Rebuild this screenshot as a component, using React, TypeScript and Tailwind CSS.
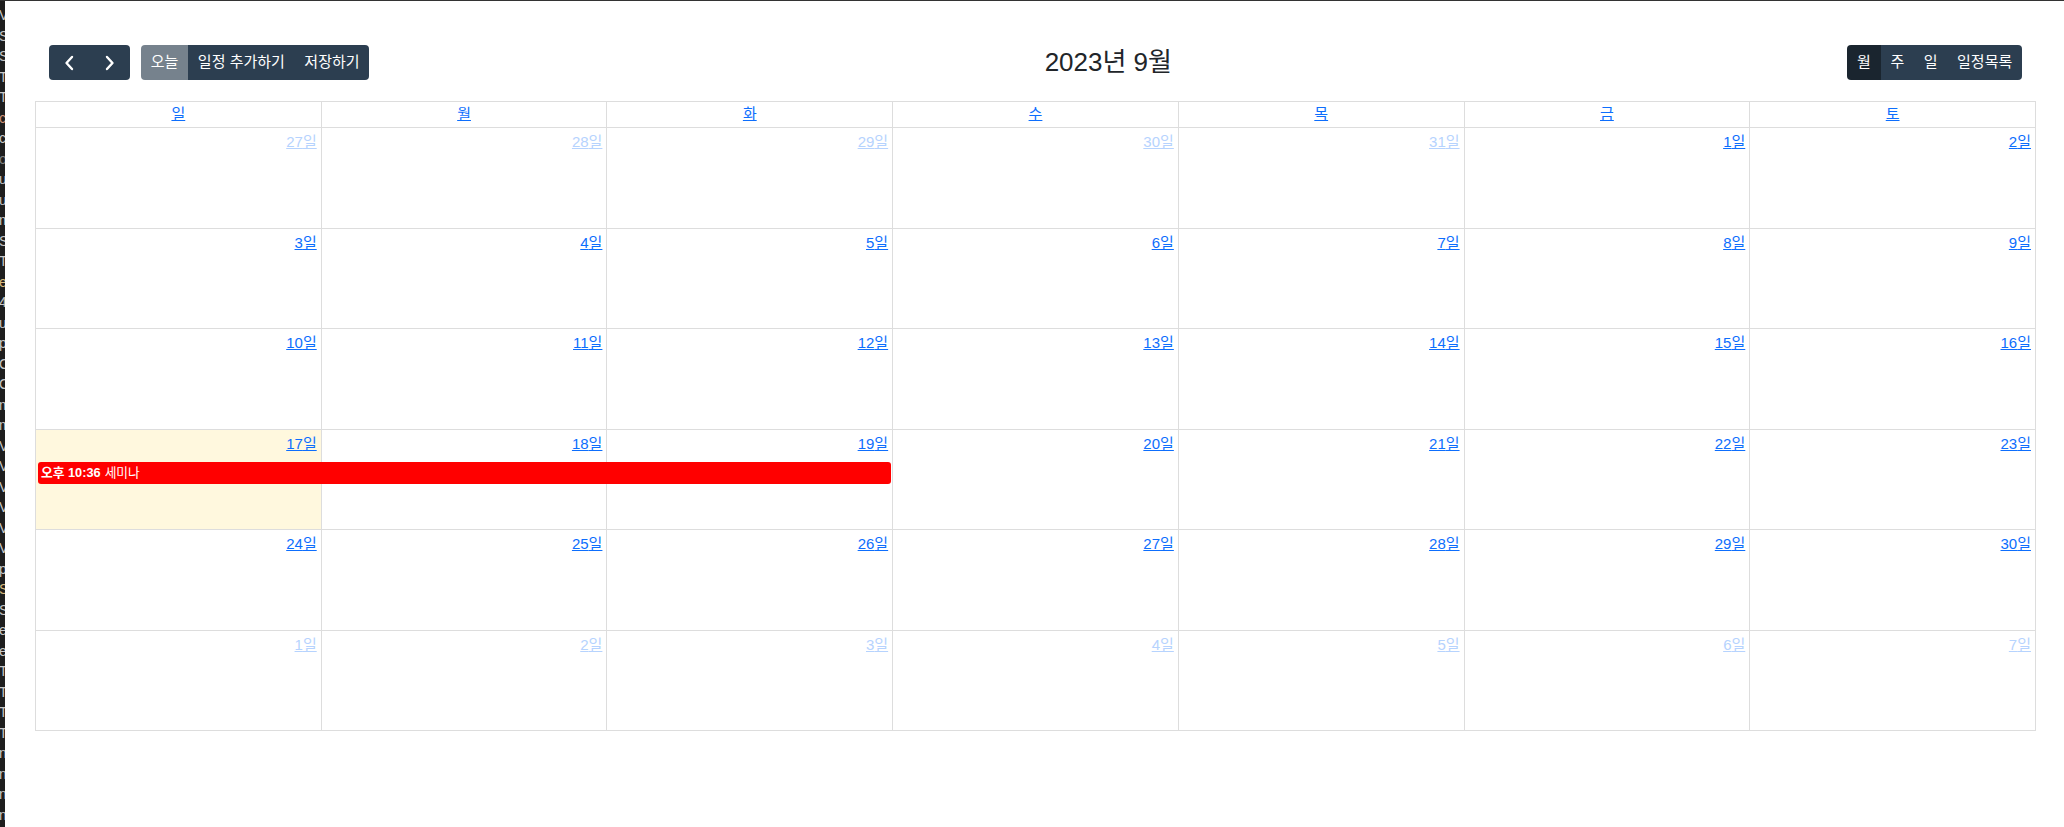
import React from "react";

const FONT = { fontFamily: '"Liberation Sans", "Noto Sans CJK KR", sans-serif' };

const stripLines: [string, string][] = [
  ["V", "#c8c8c8"], ["S", "#c8c8c8"], ["S", "#c8c8c8"], ["T", "#c8c8c8"], ["T", "#c8c8c8"],
  ["c", "#ce9178"], ["c", "#c8c8c8"], ["o", "#808080"], ["u", "#c8c8c8"], ["u", "#c8c8c8"],
  ["m", "#c8c8c8"], ["S", "#c8c8c8"], ["T", "#c8c8c8"], ["e", "#d7ba7d"], ["4", "#c8c8c8"],
  ["u", "#c8c8c8"], ["p", "#c8c8c8"], ["C", "#c8c8c8"], ["C", "#c8c8c8"], ["m", "#c8c8c8"],
  ["m", "#c8c8c8"], ["V", "#c8c8c8"], ["V", "#c8c8c8"], ["V", "#c8c8c8"], ["V", "#c8c8c8"],
  ["V", "#c8c8c8"], ["V", "#c8c8c8"], ["p", "#c8c8c8"], ["S", "#d7ba7d"], ["S", "#c8c8c8"],
  ["e", "#c8c8c8"], ["e", "#c8c8c8"], ["T", "#c8c8c8"], ["T", "#c8c8c8"], ["T", "#c8c8c8"],
  ["T", "#c8c8c8"], ["n", "#c8c8c8"], ["n", "#c8c8c8"], ["n", "#c8c8c8"], ["n", "#c8c8c8"],
];

const dayNames = ["일", "월", "화", "수", "목", "금", "토"];

type Day = { d: number; other: boolean; today?: boolean };

const weeks: Day[][] = (() => {
  const res: Day[][] = [];
  const all: Day[] = [];
  for (let d = 27; d <= 31; d++) all.push({ d, other: true });
  for (let d = 1; d <= 30; d++) all.push({ d, other: false, today: d === 17 });
  for (let d = 1; d <= 7; d++) all.push({ d, other: true });
  for (let i = 0; i < 6; i++) res.push(all.slice(i * 7, i * 7 + 7));
  return res;
})();

function Chevron({ dir }: { dir: "l" | "r" }) {
  return (
    <svg width="10" height="16" viewBox="0 0 10 16" fill="none">
      <path
        d={dir === "l" ? "M8 2 L2.5 8 L8 14" : "M2 2 L7.5 8 L2 14"}
        stroke="white"
        strokeWidth="2.4"
        strokeLinecap="round"
        strokeLinejoin="round"
      />
    </svg>
  );
}

export default function App() {
  return (
    <div
      className="w-[2064px] h-[827px] bg-white overflow-hidden flex border-t border-[#333333]"
      style={FONT}
    >
      <div className="w-[5px] shrink-0 bg-[#1e1e1e] overflow-hidden pt-[4px]">
        {stripLines.map(([c, col], i) => (
          <div
            key={i}
            className="h-[20.5px] leading-[20.5px] text-[14px] whitespace-nowrap -ml-[1px]"
            style={{ color: col }}
          >
            {c}
          </div>
        ))}
      </div>

      <div className="flex-1 pl-[30px] pr-[28px] pt-[44px] text-[15px] text-[#212529]">
        {/* Toolbar */}
        <div className="flex items-center justify-between px-[14px] h-[35px]">
          <div className="flex gap-[11px]">
            <div className="flex rounded-[4px] overflow-hidden">
              <button className="w-[40.5px] h-[35px] bg-[#2c3e50] flex items-center justify-center">
                <Chevron dir="l" />
              </button>
              <button className="w-[40.5px] h-[35px] bg-[#2c3e50] flex items-center justify-center">
                <Chevron dir="r" />
              </button>
            </div>
            <div className="flex rounded-[4px] overflow-hidden text-white text-[15px]">
              <button className="h-[35px] px-[9.75px] bg-[#76828d] text-white">오늘</button>
              <button className="h-[35px] px-[9.75px] bg-[#2c3e50]">일정 추가하기</button>
              <button className="h-[35px] px-[9.75px] bg-[#2c3e50]">저장하기</button>
            </div>
          </div>
          <h2 className="text-[26px] leading-[35px] text-[#212529]">2023년 9월</h2>
          <div className="flex rounded-[4px] overflow-hidden text-white text-[15px]">
            <button className="h-[35px] px-[9.75px] bg-[#1a252f]">월</button>
            <button className="h-[35px] px-[9.75px] bg-[#2c3e50]">주</button>
            <button className="h-[35px] px-[9.75px] bg-[#2c3e50]">일</button>
            <button className="h-[35px] px-[9.75px] bg-[#2c3e50]">일정목록</button>
          </div>
        </div>

        {/* Calendar */}
        <div className="mt-[21px] border-t border-l border-[#dddddd]">
          <div className="grid grid-cols-7">
            {dayNames.map((n) => (
              <div
                key={n}
                className="h-[26px] border-r border-b border-[#dddddd] flex items-center justify-center"
              >
                <span className="text-[#0d6efd] underline text-[15px]">{n}</span>
              </div>
            ))}
          </div>
          <div className="h-[603px] flex flex-col">
            {weeks.map((w, wi) => (
              <div key={wi} className="relative flex-1 grid grid-cols-7">
                {w.map((day, di) => (
                  <div
                    key={di}
                    className={`border-r border-b border-[#dddddd] flex justify-end items-start pt-[3px] pr-[4px] ${
                      day.today ? "bg-[#fff8de]" : ""
                    }`}
                  >
                    <span
                      className={`text-[15px] leading-[22px] underline ${
                        day.other ? "text-[#b6d3fe]" : "text-[#0d6efd]"
                      }`}
                    >
                      {day.d}일
                    </span>
                  </div>
                ))}
                {wi === 3 && (
                  <div className="absolute left-0 right-0 top-[32px] grid grid-cols-7 pointer-events-none">
                    <div className="col-span-3 mx-[2px] h-[22px] rounded-[3px] bg-[#ff0000] text-white text-[12.75px] leading-[22px] px-[3px] whitespace-nowrap overflow-hidden">
                      <span className="font-bold">오후 10:36</span>
                      <span className="ml-[4px]">세미나</span>
                    </div>
                  </div>
                )}
              </div>
            ))}
          </div>
        </div>
      </div>
    </div>
  );
}
